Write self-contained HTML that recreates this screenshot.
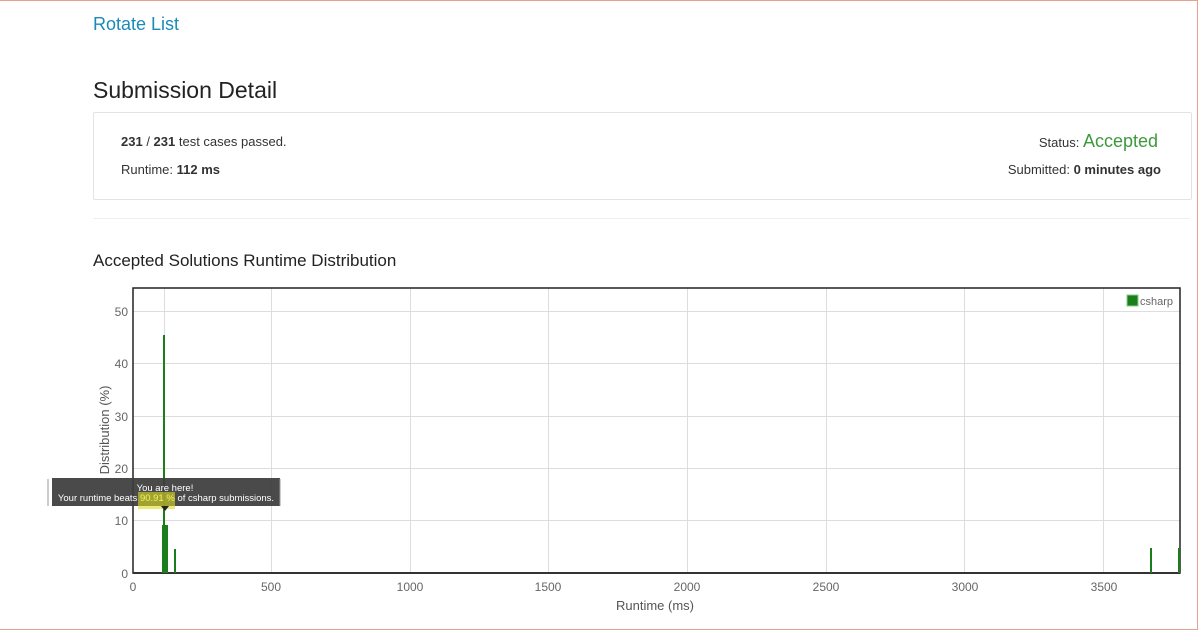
<!DOCTYPE html>
<html><head><meta charset="utf-8"><style>
body{margin:0;width:1200px;height:630px;background:#fff;font-family:"Liberation Sans",sans-serif;color:#333;position:relative;overflow:hidden}
.frame{position:absolute;left:0;top:0;width:1197px;height:628px;border-right:1px solid #e8a090;border-top:1px solid #e8a090;border-bottom:1px solid #e8a090}
.a{position:absolute}
</style></head><body>
<div class="frame"></div>
<div class="a" style="left:93px;top:14px;font-size:18px;color:#1a8bb8">Rotate List</div>
<div class="a" style="left:93px;top:77px;font-size:23px;color:#222">Submission Detail</div>
<div class="a" style="left:93px;top:112px;width:1097px;height:86px;border:1px solid #e3e3e3;border-radius:2px"></div>
<div class="a" style="left:121px;top:134px;font-size:13px"><b>231</b> / <b>231</b> test cases passed.</div>
<div class="a" style="left:121px;top:162px;font-size:13px">Runtime: <b>112 ms</b></div>
<div class="a" style="right:42px;top:131px;font-size:13px">Status: <span style="color:#3c9a3c;font-size:18px">Accepted</span></div>
<div class="a" style="right:39px;top:162px;font-size:13px">Submitted: <b>0 minutes ago</b></div>
<div class="a" style="left:93px;top:218px;width:1097px;border-top:1px solid #eee"></div>
<div class="a" style="left:93px;top:251px;font-size:17px;color:#222">Accepted Solutions Runtime Distribution</div>
<svg class="a" style="left:0;top:0" width="1200" height="630" font-family="Liberation Sans,sans-serif">
<g stroke="#ddd" stroke-width="1">
<line x1="133" y1="311.5" x2="1180" y2="311.5"/><line x1="133" y1="363.5" x2="1180" y2="363.5"/><line x1="133" y1="416.5" x2="1180" y2="416.5"/><line x1="133" y1="468.5" x2="1180" y2="468.5"/><line x1="133" y1="520.5" x2="1180" y2="520.5"/>
<line x1="271.5" y1="288" x2="271.5" y2="573"/><line x1="410.5" y1="288" x2="410.5" y2="573"/><line x1="548.5" y1="288" x2="548.5" y2="573"/><line x1="687.5" y1="288" x2="687.5" y2="573"/><line x1="826.5" y1="288" x2="826.5" y2="573"/><line x1="964.5" y1="288" x2="964.5" y2="573"/><line x1="1103.5" y1="288" x2="1103.5" y2="573"/>
<line x1="164.5" y1="288" x2="164.5" y2="573"/>
</g>
<rect x="133" y="288" width="1047" height="285" fill="none" stroke="#222" stroke-width="1.5"/>
<line x1="133" y1="573" x2="1180" y2="573" stroke="#333" stroke-width="2"/>
<g fill="#1a7f1a">
<rect x="163" y="335" width="2" height="238"/><rect x="162" y="525" width="6" height="48"/><rect x="174" y="549" width="2" height="24"/>
<rect x="1150" y="548" width="2" height="25"/><rect x="1178" y="548" width="2" height="25"/>
</g>
<g fill="#666" font-size="12" text-anchor="end">
<text x="128" y="316">50</text><text x="128" y="368">40</text><text x="128" y="421">30</text><text x="128" y="473">20</text><text x="128" y="525">10</text><text x="128" y="578">0</text>
</g>
<g fill="#666" font-size="12" text-anchor="middle">
<text x="133" y="591">0</text><text x="271" y="591">500</text><text x="410" y="591">1000</text><text x="548" y="591">1500</text><text x="687" y="591">2000</text><text x="826" y="591">2500</text><text x="965" y="591">3000</text><text x="1104" y="591">3500</text>
</g>
<text x="655" y="610" font-size="13" fill="#555" text-anchor="middle">Runtime (ms)</text>
<text transform="translate(109,430) rotate(-90)" font-size="13" fill="#555" text-anchor="middle">Distribution (%)</text>
<rect x="1127" y="295" width="11" height="11" fill="#1a7f1a" stroke="#8c8" stroke-width="1"/>
<text x="1140" y="305" font-size="11" fill="#666">csharp</text>
<rect x="52" y="478" width="228" height="28" fill="#3c3c3c" opacity="0.93"/>
<rect x="138" y="492" width="37" height="17" fill="#dede20" opacity="0.6"/>
<path d="M48 479v27M280 479v27" stroke="#999" stroke-width="1"/>
<text x="165" y="491" font-size="9.5" fill="#fff" text-anchor="middle">You are here!</text>
<text x="166" y="501" font-size="9.5" fill="#fff" text-anchor="middle">Your runtime beats <tspan fill="#f0f060">90.91 %</tspan> of csharp submissions.</text>
<path d="M161 506l4 5 4-5z" fill="#222"/>
</svg>
</body></html>
